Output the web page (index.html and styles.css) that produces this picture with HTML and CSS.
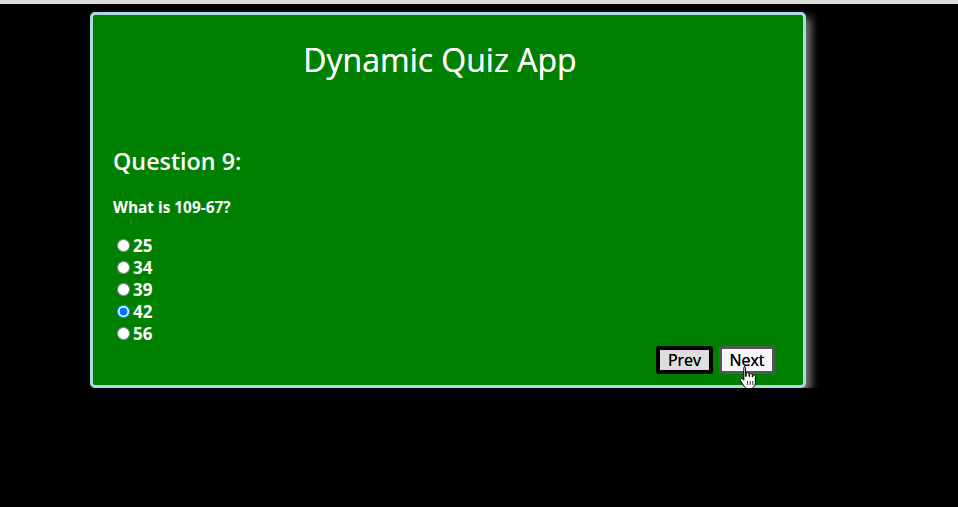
FILE: index.html
```html
<!DOCTYPE html>
<html>
<head>
<meta charset="utf-8">
<link rel="stylesheet" href="styles.css">
</head>
<body>
<div class="topstrip"></div>
<div class="card">
  <h1 class="title">Dynamic Quiz App</h1>
  <h2 class="qnum">Question 9:</h2>
  <p class="qtext">What is 109-67?</p>
  <div class="options">
    <label class="opt"><input type="radio" name="a">25</label>
    <label class="opt"><input type="radio" name="a">34</label>
    <label class="opt"><input type="radio" name="a">39</label>
    <label class="opt"><input type="radio" name="a" checked>42</label>
    <label class="opt"><input type="radio" name="a">56</label>
  </div>
  <div class="nav">
    <button class="btn prev">Prev</button>
    <button class="btn next">Next</button>
    <svg class="cursor" width="18" height="26" viewBox="0 0 18 26">
      <path d="M5 1.5c1 0 1.6.7 1.6 1.7v8.3l.6-.1V9.3c0-.9.6-1.5 1.4-1.5s1.4.6 1.4 1.5v2.2h.5v-1.4c0-.9.6-1.5 1.4-1.5s1.4.6 1.4 1.5v1.8h.5v-.8c0-.9.6-1.4 1.3-1.4s1.3.5 1.3 1.4v6.4c0 3.3-2 6.2-5.5 6.2H9.3c-2 0-3.2-1-4.3-2.6L1.6 16c-.6-.9-.4-1.8.3-2.3.7-.5 1.6-.3 2.2.5l.7 1V3.2c0-1 .6-1.7 1.2-1.7z" fill="#fff" stroke="#000" stroke-width="1"/>
      <path d="M8.6 16v4M11.2 16v4M13.8 16v4" stroke="#000" stroke-width="0.8"/>
    </svg>
  </div>
</div>
</body>
</html>
```

FILE: styles.css
```css
html, body {
  margin: 0;
  padding: 0;
  background: #000;
}
body {
  font-family: "Open Sans", "DejaVu Sans", sans-serif;
  color: #fff;
}
.topstrip {
  height: 4px;
  background: #dcdcdc;
}
.card {
  margin: 8px 0 0 90px;
  width: 710px;
  height: 370px;
  background: #008000;
  border: 3px solid #add8e6;
  border-radius: 5px;
  box-shadow: 5px 5px 9px #777;
  box-sizing: content-box;
  padding: 0;
  position: relative;
  display: flex;
  flex-direction: column;
}
.title {
  margin: 24px 0 0 0;
  padding-right: 16px;
  font-size: 32px;
  font-weight: 500;
  line-height: 42px;
  text-align: center;
  text-shadow: 0 0 0.6px #fff;
}
.qnum {
  margin: 64px 0 0 20px;
  font-size: 23.3px;
  font-weight: 600;
  line-height: 32px;
}
.qtext {
  margin: 21px 0 0 20px;
  font-size: 15.4px;
  font-weight: 700;
  line-height: 20px;
}
.options {
  margin: 16px 0 0 23px;
  display: flex;
  flex-direction: column;
}
.opt {
  display: flex;
  align-items: center;
  height: 22px;
  font-size: 17px;
  font-weight: 700;
}
.opt input {
  width: 13px;
  height: 13px;
  margin: 0 3px 0 1px;
}
.nav {
  position: relative;
  display: flex;
  justify-content: flex-end;
  gap: 6px;
  margin: 2px 28px 0 0;
}
.btn {
  font-family: "Open Sans", "DejaVu Sans", sans-serif;
  font-size: 16px;
  font-weight: 500;
  height: 28px;
  padding: 0 5px;
  border-radius: 3px;
  color: #000;
  line-height: 20px;
  text-shadow: 0 0 0.5px #000;
}
.prev {
  width: 57px;
  background: #dedede;
  border: 4px solid #000;
}
.next {
  width: 56px;
  background: #f5f5fa;
  border: 3px solid #555;
}
.cursor {
  position: absolute;
  right: 18px;
  top: 19px;
}
```
